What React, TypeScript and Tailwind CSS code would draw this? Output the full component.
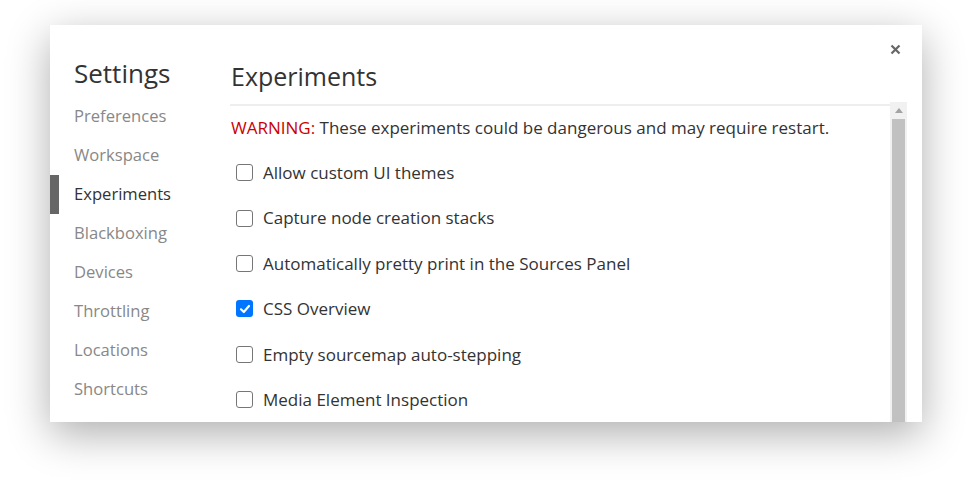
import React from 'react';

const navItems = [
  'Preferences',
  'Workspace',
  'Experiments',
  'Blackboxing',
  'Devices',
  'Throttling',
  'Locations',
  'Shortcuts',
];

const experiments = [
  { label: 'Allow custom UI themes', checked: false },
  { label: 'Capture node creation stacks', checked: false },
  { label: 'Automatically pretty print in the Sources Panel', checked: false },
  { label: 'CSS Overview', checked: true },
  { label: 'Empty sourcemap auto-stepping', checked: false },
  { label: 'Media Element Inspection', checked: false },
];

function Checkbox({ checked }: { checked: boolean }) {
  if (checked) {
    return (
      <span className="flex h-[17px] w-[17px] shrink-0 items-center justify-center rounded-[3px] bg-[#0075ff]">
        <svg width="12" height="12" viewBox="0 0 12 12">
          <path d="M2 6.3 L4.8 9 L10 3" fill="none" stroke="white" strokeWidth="2.2" strokeLinecap="round" strokeLinejoin="round" />
        </svg>
      </span>
    );
  }
  return <span className="h-[17px] w-[17px] shrink-0 rounded-[3px] border-[1.5px] border-[#767676] bg-white" />;
}

export default function App() {
  return (
    <div
      className="h-[497px] w-[972px] overflow-hidden bg-white pl-[50px] pt-[25px]"
      style={{ fontFamily: '"Open Sans", "Noto Sans", sans-serif' }}
    >
      <div className="relative flex h-[397px] w-[872px] bg-white shadow-[0_12px_40px_rgba(0,0,0,0.32)]">
        {/* sidebar */}
        <aside className="w-[180px] shrink-0">
          <h1 className="pl-[24px] pt-[30px] text-[26px] leading-[36px] text-[#333]">Settings</h1>
          <nav className="mt-[6px] flex flex-col">
            {navItems.map((item) => (
              <div
                key={item}
                className={`flex h-[39px] items-center border-l-[9px] pl-[15px] text-[16.6px] ${
                  item === 'Experiments' ? 'border-[#666] text-[#333]' : 'border-transparent text-[#888]'
                }`}
              >
                {item}
              </div>
            ))}
          </nav>
        </aside>

        {/* main */}
        <main className="flex min-w-0 flex-1 flex-col pr-[15px]">
          <h2 className="pl-[1px] pt-[33px] text-[25px] leading-[36px] text-[#333]">Experiments</h2>
          <div className="mt-[10px] flex min-h-0 flex-1">
            <div className="min-w-0 flex-1 border-t-2 border-[#eee]">
              <p className="pl-[1px] pt-[10px] text-[17px] leading-[24px] text-[#333]">
                <span className="text-[#cc0000]">WARNING:</span> These experiments could be dangerous and may require restart.
              </p>
              <div className="mt-[10px] flex flex-col">
                {experiments.map((e) => (
                  <label key={e.label} className="flex h-[45.4px] items-center gap-[10px] pl-[6px] text-[17px] text-[#333]">
                    <Checkbox checked={e.checked} />
                    <span>{e.label}</span>
                  </label>
                ))}
              </div>
            </div>
            {/* scrollbar */}
            <div className="-mt-[2px] flex w-[17px] shrink-0 flex-col bg-[#f1f1f1]">
              <div className="flex h-[17px] items-center justify-center">
                <svg width="8" height="5" viewBox="0 0 8 5">
                  <path d="M0 5 L4 0 L8 5 Z" fill="#a3a3a3" />
                </svg>
              </div>
              <div className="mx-[2px] flex-1 bg-[#c1c1c1]" />
            </div>
          </div>
        </main>

        <button className="absolute right-[20px] top-[17px] flex h-[14px] w-[14px] items-center justify-center">
          <svg width="11" height="11" viewBox="0 0 11 11">
            <path d="M1.5 1.5 L9.5 9.5 M9.5 1.5 L1.5 9.5" stroke="#666" strokeWidth="2.2" />
          </svg>
        </button>
      </div>
    </div>
  );
}
